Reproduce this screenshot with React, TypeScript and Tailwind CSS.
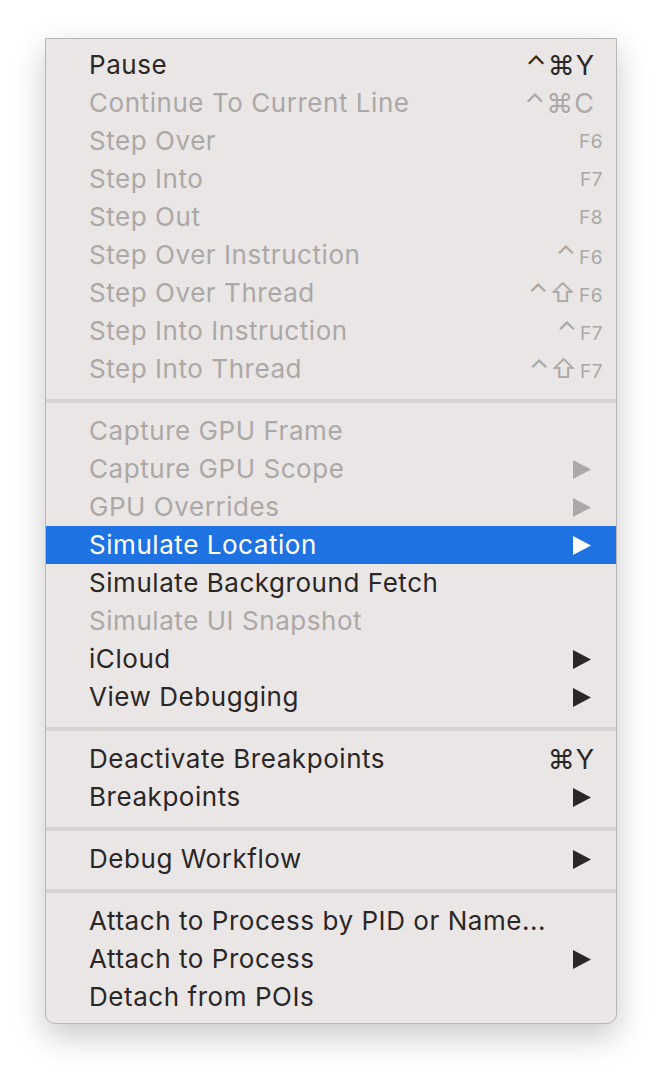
import React from "react";

type Item = {
  label: string;
  disabled?: boolean;
  shortcut?: React.ReactNode;
  fkey?: boolean;
  submenu?: boolean;
  active?: boolean;
};

const Fkey = ({ pre, k }: { pre?: string; k: string }) => (
  <span className="flex items-baseline">
    {pre && <span className="text-[26px] mr-[2px]">{pre}</span>}
    <span className="text-[19px] tracking-[0.5px]">{k}</span>
  </span>
);

const GROUPS: Item[][] = [
  [
    { label: "Pause", shortcut: "⌃⌘Y" },
    { label: "Continue To Current Line", disabled: true, shortcut: "⌃⌘C" },
    { label: "Step Over", disabled: true, fkey: true, shortcut: <Fkey k="F6" /> },
    { label: "Step Into", disabled: true, fkey: true, shortcut: <Fkey k="F7" /> },
    { label: "Step Out", disabled: true, fkey: true, shortcut: <Fkey k="F8" /> },
    { label: "Step Over Instruction", disabled: true, fkey: true, shortcut: <Fkey pre="⌃" k="F6" /> },
    { label: "Step Over Thread", disabled: true, fkey: true, shortcut: <Fkey pre="⌃⇧" k="F6" /> },
    { label: "Step Into Instruction", disabled: true, fkey: true, shortcut: <Fkey pre="⌃" k="F7" /> },
    { label: "Step Into Thread", disabled: true, fkey: true, shortcut: <Fkey pre="⌃⇧" k="F7" /> },
  ],
  [
    { label: "Capture GPU Frame", disabled: true },
    { label: "Capture GPU Scope", disabled: true, submenu: true },
    { label: "GPU Overrides", disabled: true, submenu: true },
    { label: "Simulate Location", submenu: true, active: true },
    { label: "Simulate Background Fetch" },
    { label: "Simulate UI Snapshot", disabled: true },
    { label: "iCloud", submenu: true },
    { label: "View Debugging", submenu: true },
  ],
  [
    { label: "Deactivate Breakpoints", shortcut: "⌘Y" },
    { label: "Breakpoints", submenu: true },
  ],
  [{ label: "Debug Workflow", submenu: true }],
  [
    { label: "Attach to Process by PID or Name..." },
    { label: "Attach to Process", submenu: true },
    { label: "Detach from POIs" },
  ],
];

function Arrow() {
  return (
    <svg width="18" height="19" viewBox="0 0 18 19" className="mr-[4px]">
      <path d="M0 0 L18 9.5 L0 19 Z" fill="currentColor" />
    </svg>
  );
}

function Row({ item }: { item: Item }) {
  const color = item.active
    ? "bg-[#1f72e2] text-white"
    : item.disabled
    ? "text-[#aba8a7]"
    : "text-[#2a2726]";
  return (
    <div
      className={`h-[38px] flex items-center justify-between pl-[43px] ${
        item.fkey ? "pr-[13px]" : "pr-[21px]"
      } ${color}`}
    >
      <span className="text-[26px] leading-none tracking-[0.55px]">{item.label}</span>
      {item.shortcut && (
        <span className="text-[27px] leading-none tracking-[1px]">{item.shortcut}</span>
      )}
      {item.submenu && <Arrow />}
    </div>
  );
}

export default function App() {
  return (
    <div
      className="w-[662px] h-[1078px] bg-white pt-[38px] pl-[45px]"
      style={{ fontFamily: "Inter, 'DejaVu Sans', sans-serif" }}
    >
      <div className="w-[572px] bg-[#eae6e5] border border-[#b9b6b5] rounded-b-[10px] pt-[7px] pb-[7px] shadow-[0_12px_32px_rgba(0,0,0,0.22)]">
        {GROUPS.map((group, gi) => (
          <div key={gi}>
            {gi > 0 && (
              <div className="pt-[11px] pb-[9px]">
                <div className="h-[4px] bg-[#d7d3d2]" />
              </div>
            )}
            {group.map((item) => (
              <Row key={item.label} item={item} />
            ))}
          </div>
        ))}
      </div>
    </div>
  );
}
